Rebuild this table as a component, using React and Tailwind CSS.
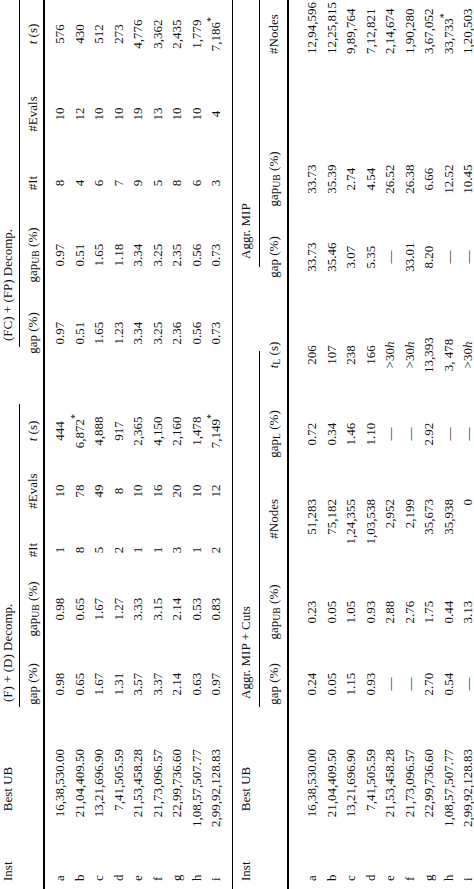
import React from 'react';

const t1 = [
  ['a', '16,38,530.00', '0.98', '0.98', '1', '10', '444', '0.97', '0.97', '8', '10', '576'],
  ['b', '21,04,409.50', '0.65', '0.65', '8', '78', '6,872*', '0.51', '0.51', '4', '12', '430'],
  ['c', '13,21,696.90', '1.67', '1.67', '5', '49', '4,888', '1.65', '1.65', '6', '10', '512'],
  ['d', '7,41,505.59', '1.31', '1.27', '2', '8', '917', '1.23', '1.18', '7', '10', '273'],
  ['e', '21,53,458.28', '3.57', '3.33', '1', '10', '2,365', '3.34', '3.34', '9', '19', '4,776'],
  ['f', '21,73,096.57', '3.37', '3.15', '1', '16', '4,150', '3.25', '3.25', '5', '13', '3,362'],
  ['g', '22,99,736.60', '2.14', '2.14', '3', '20', '2,160', '2.36', '2.35', '8', '10', '2,435'],
  ['h', '1,08,57,507.77', '0.63', '0.53', '1', '10', '1,478', '0.56', '0.56', '6', '10', '1,779'],
  ['i', '2,99,92,128.83', '0.97', '0.83', '2', '12', '7,149*', '0.73', '0.73', '3', '4', '7,186*'],
];

const t2 = [
  ['a', '16,38,530.00', '0.24', '0.23', '51,283', '0.72', '206', '33.73', '33.73', '12,94,596'],
  ['b', '21,04,409.50', '0.05', '0.05', '75,182', '0.34', '107', '35.46', '35.39', '12,25,815'],
  ['c', '13,21,696.90', '1.15', '1.05', '1,24,355', '1.46', '238', '3.07', '2.74', '9,89,764'],
  ['d', '7,41,505.59', '0.93', '0.93', '1,03,538', '1.10', '166', '5.35', '4.54', '7,12,821'],
  ['e', '21,53,458.28', '—', '2.88', '2,952', '—', '>30h', '—', '26.52', '2,14,674'],
  ['f', '21,73,096.57', '—', '2.76', '2,199', '—', '>30h', '33.01', '26.38', '1,90,280'],
  ['g', '22,99,736.60', '2.70', '1.75', '35,673', '2.92', '13,393', '8.20', '6.66', '3,67,052'],
  ['h', '1,08,57,507.77', '0.54', '0.44', '35,938', '—', '3, 478', '—', '12.52', '33,733*'],
  ['i', '2,99,92,128.83', '—', '3.13', '0', '—', '>30h', '—', '10.45', '1,20,503'],
];

const align1 = ['l', 'r', 'c', 'c', 'c', 'c', 'c', 'c', 'c', 'c', 'c', 'c'];
const align2 = ['l', 'r', 'c', 'c', 'r', 'c', 'c', 'c', 'c', 'n'];

const alignCls = {
  l: 'justify-start pl-2',
  r: 'justify-end pr-[10px]',
  c: 'justify-center',
  n: 'justify-start pl-[121px]',
};

const grid1 = 'grid w-[918px] grid-cols-[50px_100px_110px_40px_78px_40px_80px_116px_40px_104px_34px_126px]';
const grid2 = 'grid w-[898px] grid-cols-[50px_100px_110px_34px_106px_110px_48px_148px_8px_184px]';

function Val({ v }) {
  if (v === '>30h') {
    return (
      <span>
        &gt;30<i>h</i>
      </span>
    );
  }
  if (v.endsWith('*')) {
    return (
      <span>
        {v.slice(0, -1)}
        <span className="text-[10px] align-top leading-none">*</span>
      </span>
    );
  }
  return <span>{v}</span>;
}

const Gub = () => (
  <span>
    gap<sub>UB</sub> (%)
  </span>
);

function Cell({ a, children }) {
  return <div className={`flex whitespace-nowrap ${alignCls[a]}`}>{children}</div>;
}

function Rows({ data, align, grid }) {
  return data.map((row) => (
    <div key={row[0]} className={`${grid} h-[19.5px] leading-[19.5px]`}>
      {row.map((v, i) => (
        <Cell key={i} a={align[i]}>
          <Val v={v} />
        </Cell>
      ))}
    </div>
  ));
}

export default function App() {
  return (
    <div className="w-[474px] h-[889px] overflow-hidden bg-white">
      <div className="w-[889px] h-[474px] origin-top-left -rotate-90 translate-y-[889px] overflow-hidden font-['Liberation_Serif',serif] text-[13px] text-[#111]">
        {/* first table: (F)+(D) and (FC)+(FP) decomposition */}
        <div className={`${grid1} mt-px h-[14px] leading-[14px]`}>
          <Cell a="l">Inst</Cell>
          <Cell a="c">Best UB</Cell>
          <div className="col-span-5 whitespace-nowrap pl-[37px]">(F) + (D) Decomp.</div>
          <div className="col-span-5 whitespace-nowrap pl-[50px]">(FC) + (FP) Decomp.</div>
        </div>
        <div className={`${grid1} mt-[4px]`}>
          <div className="col-span-2" />
          <div className="col-span-5 ml-[32px] mr-[13px] h-px bg-black" />
          <div className="col-span-5 ml-[44px] h-px bg-black" />
        </div>
        <div className={`${grid1} mt-[6px] h-[14px] leading-[14px]`}>
          <div />
          <div />
          <Cell a="c">gap (%)</Cell>
          <Cell a="c"><Gub /></Cell>
          <Cell a="c">#It</Cell>
          <Cell a="c">#Evals</Cell>
          <Cell a="c"><span><i>t</i> (s)</span></Cell>
          <Cell a="c">gap (%)</Cell>
          <Cell a="c"><Gub /></Cell>
          <Cell a="c">#It</Cell>
          <Cell a="c">#Evals</Cell>
          <Cell a="c"><span><i>t</i> (s)</span></Cell>
        </div>
        <div className="mt-[3px] h-[2px] bg-black" />
        <div className="mt-[5.25px]">
          <Rows data={t1} align={align1} grid={grid1} />
        </div>
        <div className="mt-[6.25px] h-px bg-black" />

        {/* second table: aggregated MIP */}
        <div className={`${grid2} mt-[6px] h-[14px] leading-[14px]`}>
          <Cell a="l">Inst</Cell>
          <Cell a="c">Best UB</Cell>
          <div className="col-span-5 whitespace-nowrap pl-[40px]">Aggr. MIP + Cuts</div>
          <div className="col-span-3 whitespace-nowrap pl-[72px]">Aggr. MIP</div>
        </div>
        <div className={`${grid2} mt-[6px]`}>
          <div className="col-span-2" />
          <div className="col-span-5 ml-[32px] mr-[20px] h-px bg-black" />
          <div className="col-span-3 ml-[64px] h-px bg-black" />
        </div>
        <div className={`${grid2} mt-[7px] h-[14px] leading-[14px]`}>
          <div />
          <div />
          <Cell a="c">gap (%)</Cell>
          <Cell a="c"><Gub /></Cell>
          <Cell a="r">#Nodes</Cell>
          <Cell a="c"><span>gap<sub>L</sub> (%)</span></Cell>
          <Cell a="c"><span><i>t</i><sub>L</sub> (s)</span></Cell>
          <Cell a="c">gap (%)</Cell>
          <Cell a="c"><Gub /></Cell>
          <Cell a="n">#Nodes</Cell>
        </div>
        <div className="mt-[6px] h-[2px] bg-black" />
        <div className="mt-[13.25px]">
          <Rows data={t2} align={align2} grid={grid2} />
        </div>
      </div>
    </div>
  );
}
